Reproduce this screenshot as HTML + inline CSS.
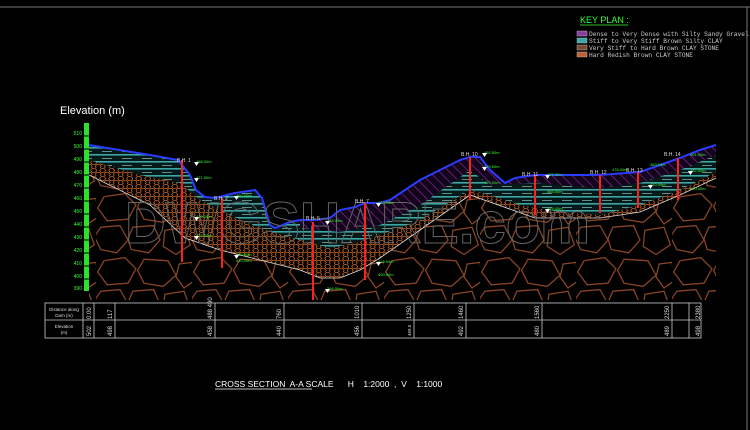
<!DOCTYPE html>
<html><head><meta charset="utf-8"><style>
html,body{margin:0;padding:0;background:#000;}
svg{display:block;font-family:"Liberation Sans",sans-serif;}
</style></head><body>
<svg width="750" height="430" viewBox="0 0 750 430" xmlns="http://www.w3.org/2000/svg">
<defs>
<pattern id="hex" width="9" height="8" patternUnits="userSpaceOnUse">
<rect width="9" height="8" fill="#000"/>
<polygon points="2.2,0.5 5.2,0.5 6.7,2.5 5.2,4.5 2.2,4.5 0.7,2.5" fill="none" stroke="#c8641e" stroke-width="0.8"/>
<polygon points="6.7,4.5 9.7,4.5 11.2,6.5 9.7,8.5 6.7,8.5 5.2,6.5" fill="none" stroke="#c8641e" stroke-width="0.8"/>
<polygon points="-2.3,4.5 0.7,4.5 2.2,6.5 0.7,8.5 -2.3,8.5" fill="none" stroke="#c8641e" stroke-width="0.8"/>
</pattern>
<pattern id="rub" width="96" height="64" patternUnits="userSpaceOnUse">
<rect width="96" height="64" fill="#000"/>
<g fill="none" stroke="#8a4424" stroke-width="0.8" transform="scale(1.6)">
<polygon points="5,3 18,1 25,8 20,17 7,18 1,10"/>
<polygon points="30,2 45,3 50,12 42,19 30,17 26,9"/>
<polygon points="52,5 60,4 62,15 55,20 50,13"/>
<polygon points="3,22 15,21 20,30 13,38 3,36 -1,28"/>
<polygon points="23,22 36,21 40,30 33,38 22,36 20,29"/>
<polygon points="43,24 55,22 59,33 50,39 42,34"/>
</g>
</pattern>
<pattern id="teal" width="20" height="7" patternUnits="userSpaceOnUse">
<rect width="20" height="7" fill="#061818"/>
<rect y="0" width="20" height="1.6" fill="#3aa6a6"/>
<line x1="2" y1="4.5" x2="12" y2="4.5" stroke="#9dd" stroke-width="0.6"/>
</pattern>
<pattern id="purp" width="7" height="7" patternUnits="userSpaceOnUse" patternTransform="rotate(-45)">
<rect width="7" height="7" fill="#12041a"/>
<line x1="0" y1="0" x2="0" y2="7" stroke="#a82cb8" stroke-width="1.1"/>
</pattern>
</defs>
<rect width="750" height="430" fill="#000"/>
<line x1="0" y1="7" x2="750" y2="7" stroke="#777" stroke-width="1"/>
<line x1="747" y1="7" x2="747" y2="430" stroke="#777" stroke-width="1"/>

<polygon points="89,175 150,205 185,238 220,250 260,260 300,270 320,278 340,278 360,270 380,258 420,230 470,195 535,218 600,218 640,212 680,195 716,178 716,300 89,300" fill="url(#rub)"/>
<polygon points="89,160 140,175 180,183 200,200 230,215 260,228 300,240 330,248 355,243 380,235 420,220 470,190 490,195 520,205 560,212 600,215 640,205 680,190 716,172 716,178 680,195 640,212 600,218 535,218 470,195 420,230 380,258 360,270 340,278 320,278 300,270 260,260 220,250 185,238 150,205 89,175" fill="url(#hex)"/>
<polygon points="89,145 150,155 178,160 190,175 196,190 205,197 215,198 235,193 255,190 262,198 270,225 275,228 290,222 300,220 315,220 330,218 340,210 355,207 365,203 380,203 390,200 420,180 460,160 470,157 480,157 490,170 505,183 515,178 535,175 600,175 640,172 660,165 680,158 700,150 716,145 716,172 680,190 640,205 600,215 560,212 520,205 490,195 470,190 420,220 380,235 355,243 330,248 300,240 260,228 230,215 200,200 180,183 140,175 89,160" fill="url(#teal)"/>
<polygon points="300,220 315,220 330,218 340,210 355,207 365,203 380,203 390,200 420,180 460,160 470,157 480,157 490,170 505,183 515,178 535,175 600,175 640,172 660,165 680,158 700,150 716,145 716,155 680,170 640,183 600,188 535,183 490,185 470,170 420,205 380,225 340,232 300,228" fill="url(#purp)"/>
<polyline points="89,145 150,155 178,160 190,175 196,190 205,197 215,198 235,193 255,190 262,198 270,225 275,228 290,222 300,220 315,220 330,218 340,210 355,207 365,203 380,203 390,200 420,180 460,160 470,157 480,157 490,170 505,183 515,178 535,175 600,175 640,172 660,165 680,158 700,150 716,145" fill="none" stroke="#2a3cff" stroke-width="2"/>
<polyline points="89,175 150,205 185,238 220,250 260,260 300,270 320,278 340,278 360,270 380,258 420,230 470,195 535,218 600,218 640,212 680,195 716,178" fill="none" stroke="#ddd" stroke-width="0.8"/>

<text x="125" y="243" font-size="58" font-weight="bold" fill="none" stroke="#666" stroke-width="1" textLength="465" lengthAdjust="spacingAndGlyphs">DWGSHARE.com</text>

<g stroke="#ff2020" stroke-width="2">
<line x1="182" y1="160" x2="182" y2="262"/><line x1="222" y1="198" x2="222" y2="268"/>
<line x1="313" y1="222" x2="313" y2="300"/><line x1="365" y1="203" x2="365" y2="280"/>
<line x1="470" y1="157" x2="470" y2="200"/><line x1="535" y1="175" x2="535" y2="215"/>
<line x1="600" y1="175" x2="600" y2="213"/><line x1="638" y1="172" x2="638" y2="208"/>
<line x1="678" y1="158" x2="678" y2="200"/>
</g>
<g font-size="5" fill="#ddd">
<text x="177" y="162">B.H. 1</text><text x="214" y="200">B.H. 2</text><text x="306" y="220">B.H. 5</text>
<text x="355" y="203">B.H. 7</text><text x="461" y="156">B.H. 10</text><text x="522" y="176">B.H. 11</text>
<text x="590" y="174">B.H. 12</text><text x="626" y="172">B.H. 13</text><text x="664" y="156">B.H. 14</text>
</g>
<g font-size="4" fill="#3f3">
<text x="196" y="163">486.00m</text><text x="196" y="179">471.50m</text><text x="196" y="218">440.00m</text><text x="196" y="237">425.00m</text>
<text x="236" y="197">460.00m</text><text x="236" y="256">420.00m</text><text x="236" y="262">410.00m</text>
<text x="327" y="222">444.00m</text><text x="327" y="290">396.00m</text><text x="378" y="204">452.00m</text><text x="378" y="263">415.00m</text><text x="378" y="276">400.00m</text>
<text x="484" y="154">492.50m</text><text x="484" y="168">479.50m</text><text x="484" y="184">470.00m</text>
<text x="547" y="176">476.00m</text><text x="547" y="193">465.00m</text><text x="547" y="210">445.00m</text>
<text x="612" y="171">476.00m</text><text x="650" y="166">483.00m</text><text x="650" y="186">470.00m</text>
<text x="690" y="156">491.00m</text><text x="690" y="172">482.00m</text><text x="690" y="190">470.00m</text>
</g>
<g fill="#fff">
<polygon points="194,162 199,162 196.5,166"/><polygon points="194,178 199,178 196.5,182"/><polygon points="194,217 199,217 196.5,221"/><polygon points="194,236 199,236 196.5,240"/>
<polygon points="234,196 239,196 236.5,200"/><polygon points="234,255 239,255 236.5,259"/><polygon points="325,221 330,221 327.5,225"/><polygon points="325,289 330,289 327.5,293"/>
<polygon points="376,203 381,203 378.5,207"/><polygon points="376,262 381,262 378.5,266"/><polygon points="482,153 487,153 484.5,157"/><polygon points="482,167 487,167 484.5,171"/>
<polygon points="545,175 550,175 547.5,179"/><polygon points="545,209 550,209 547.5,213"/><polygon points="648,185 653,185 650.5,189"/><polygon points="688,171 693,171 690.5,175"/>
</g>

<text x="60" y="114" font-size="11" fill="#fff">Elevation (m)</text>
<rect x="84" y="123" width="5" height="168" fill="#2ee02e"/>
<g stroke="#000" stroke-width="1"><line x1="84" y1="136" x2="89" y2="136"/><line x1="84" y1="149" x2="89" y2="149"/><line x1="84" y1="162" x2="89" y2="162"/><line x1="84" y1="175" x2="89" y2="175"/><line x1="84" y1="188" x2="89" y2="188"/><line x1="84" y1="201" x2="89" y2="201"/><line x1="84" y1="214" x2="89" y2="214"/><line x1="84" y1="227" x2="89" y2="227"/><line x1="84" y1="240" x2="89" y2="240"/><line x1="84" y1="253" x2="89" y2="253"/><line x1="84" y1="266" x2="89" y2="266"/><line x1="84" y1="279" x2="89" y2="279"/></g>
<g font-size="5" fill="#3f3" text-anchor="end">
<text x="82" y="135">510</text><text x="82" y="148">500</text><text x="82" y="161">490</text><text x="82" y="174">480</text><text x="82" y="187">470</text><text x="82" y="200">460</text><text x="82" y="213">450</text><text x="82" y="226">440</text><text x="82" y="239">430</text><text x="82" y="252">420</text><text x="82" y="265">410</text><text x="82" y="278">400</text><text x="82" y="290">390</text>
</g>

<g stroke="#ccc" stroke-width="0.8" fill="none">
<rect x="45" y="303" width="656" height="35"/>
<line x1="45" y1="320" x2="701" y2="320"/>
<line x1="83" y1="303" x2="83" y2="338"/><line x1="94" y1="303" x2="94" y2="338"/><line x1="115" y1="303" x2="115" y2="338"/><line x1="215" y1="303" x2="215" y2="338"/><line x1="284" y1="303" x2="284" y2="338"/><line x1="362" y1="303" x2="362" y2="338"/><line x1="414" y1="303" x2="414" y2="338"/><line x1="466" y1="303" x2="466" y2="338"/><line x1="542" y1="303" x2="542" y2="338"/><line x1="672" y1="303" x2="672" y2="338"/><line x1="689" y1="303" x2="689" y2="338"/>
</g>
<g font-size="4.5" fill="#ddd" text-anchor="middle"><text x="64" y="311">Distance along</text><text x="64" y="317">Dam (m)</text><text x="64" y="328">Elevation</text><text x="64" y="334">(m)</text></g>
<g font-size="6" fill="#ddd">
<text transform="translate(91,319) rotate(-90)">0.00</text><text transform="translate(91,336) rotate(-90)">502</text>
<text transform="translate(112,319) rotate(-90)">117</text><text transform="translate(112,336) rotate(-90)">498</text>
<text transform="translate(212,319) rotate(-90)">488  490</text><text transform="translate(212,336) rotate(-90)">458</text>
<text transform="translate(281,319) rotate(-90)">760</text><text transform="translate(281,336) rotate(-90)">440</text>
<text transform="translate(359,319) rotate(-90)">1010</text><text transform="translate(359,336) rotate(-90)">456</text>
<text transform="translate(411,319) rotate(-90)">1250</text><text transform="translate(411,336) rotate(-90)" font-size="4.5">469.5</text>
<text transform="translate(463,319) rotate(-90)">1460</text><text transform="translate(463,336) rotate(-90)">492</text>
<text transform="translate(539,319) rotate(-90)">1560</text><text transform="translate(539,336) rotate(-90)">480</text>
<text transform="translate(669,319) rotate(-90)">2250</text><text transform="translate(669,336) rotate(-90)">489</text>
<text transform="translate(700,319) rotate(-90)">2380</text><text transform="translate(700,336) rotate(-90)">498</text>
</g>

<text x="215" y="387" font-size="8.5" fill="#fff" xml:space="preserve">CROSS SECTION  A-A SCALE      H    1:2000  ,  V    1:1000</text>
<line x1="215" y1="389" x2="312" y2="389" stroke="#fff" stroke-width="0.7"/>

<text x="580" y="23" font-size="9" fill="#3f3">KEY PLAN :</text>
<line x1="580" y1="25" x2="628" y2="25" stroke="#3f3" stroke-width="0.7"/>
<rect x="577" y="31" width="10" height="5" fill="#8a3aa0" stroke="#ccc" stroke-width="0.4"/>
<rect x="577" y="38" width="10" height="5" fill="#3aa6a6" stroke="#ccc" stroke-width="0.4"/>
<rect x="577" y="45" width="10" height="5" fill="#7a4a30" stroke="#ccc" stroke-width="0.4"/>
<rect x="577" y="52" width="10" height="5" fill="#c06030" stroke="#ccc" stroke-width="0.4"/>
<g font-size="6.2" fill="#ccc" font-family="Liberation Mono, monospace">
<text x="589" y="36">Dense to Very Dense with Silty Sandy Gravel</text>
<text x="589" y="43">Stiff to Very Stiff Brown Silty CLAY</text>
<text x="589" y="50">Very Stiff to Hard Brown CLAY STONE</text>
<text x="589" y="57">Hard Redish Brown CLAY STONE</text>
</g>
</svg>
</body></html>
